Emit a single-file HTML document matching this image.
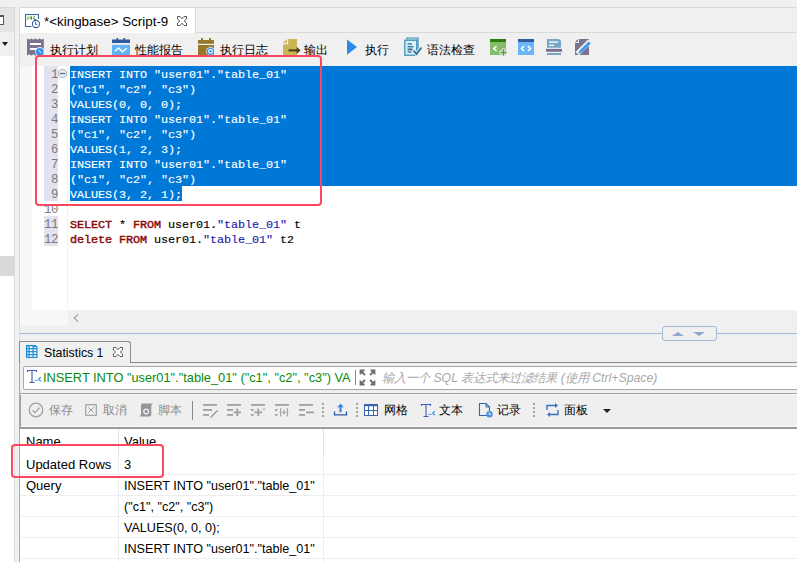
<!DOCTYPE html>
<html><head><meta charset="utf-8">
<style>
*{margin:0;padding:0;box-sizing:border-box}
html,body{width:797px;height:562px;overflow:hidden;background:#f0f0f0;font-family:"Liberation Sans",sans-serif;font-size:12px;color:#000;position:relative}
.a{position:absolute}
.ln{position:absolute;left:44px;width:14px;text-align:right;color:#7a7a7a;font-family:"Liberation Mono",monospace;font-size:12.3px;letter-spacing:-0.38px;line-height:15px}
.code{position:absolute;left:70px;font-family:"Liberation Mono",monospace;font-size:11.8px;letter-spacing:-0.08px;line-height:15px;white-space:pre;color:#000;-webkit-text-stroke:0.15px currentColor}
.kw{color:#8b0a0a;-webkit-text-stroke:0.45px currentColor}
.str{color:#1c1ca8}
.sel{color:#fff}
.tb{position:absolute;top:43px;font-size:12px;line-height:14px;white-space:nowrap}
.tb2{position:absolute;top:403px;font-size:12px;line-height:14px;white-space:nowrap}
.g{color:#8c8c8c}
.dots{position:absolute;top:403px;width:2px;height:15px;background:repeating-linear-gradient(to bottom,#a8a290 0,#a8a290 2px,transparent 2px,transparent 4px)}
.row{position:absolute;left:20px;width:777px;height:1px;background:#eeeeee}
.cell{position:absolute;font-size:13px;line-height:16px;white-space:nowrap}
</style></head><body>

<!-- top line -->
<div class="a" style="left:0;top:7px;width:15px;height:1px;background:#dadada"></div>
<div class="a" style="left:19px;top:7px;width:778px;height:1px;background:#dadada"></div>

<!-- left panel -->
<div class="a" style="left:0;top:8px;width:14px;height:24px;background:#e4e4e4"></div>
<div class="a" style="left:0;top:32px;width:14px;height:24px;background:#f0f0f0"></div>
<div class="a" style="left:0;top:56px;width:14px;height:506px;background:#fff"></div>
<div class="a" style="left:0;top:256px;width:14px;height:20px;background:#d9d9d9"></div>
<div class="a" style="left:14px;top:7px;width:1px;height:555px;background:#dadada"></div>
<div class="a" style="left:-6px;top:15px;width:10px;height:10px;border:1px solid #555;border-top-width:2px;background:#fff"></div>
<div class="a" style="left:2px;top:42px;width:0;height:0;border-left:3.6px solid transparent;border-right:3.6px solid transparent;border-top:4.5px solid #1a1a1a"></div>

<!-- editor panel outer border -->
<div class="a" style="left:19px;top:7px;width:1px;height:555px;background:#dadada"></div>

<!-- tab -->
<div class="a" style="left:20px;top:8px;width:175px;height:25px;background:#fff"></div>
<div class="a" style="left:195px;top:8px;width:1px;height:25px;background:#dadada"></div>
<div class="a" style="left:196px;top:32px;width:601px;height:1px;background:#dadada"></div>
<div class="a" style="left:44px;top:14px;font-size:13.4px;line-height:16px;white-space:nowrap">*&lt;kingbase&gt; Script-9</div>

<!-- toolbar text -->
<div class="tb" style="left:50px">执行计划</div>
<div class="tb" style="left:135px">性能报告</div>
<div class="tb" style="left:220px">执行日志</div>
<div class="tb" style="left:304px">输出</div>
<div class="tb" style="left:365px">执行</div>
<div class="tb" style="left:427px">语法检查</div>

<!-- tab icon -->
<svg class="a" style="left:24px;top:13px" width="17" height="17" viewBox="0 0 17 17">
<path d="M7.5 13.5H1.5V1.5H14.5V6" fill="none" stroke="#3a63ad" stroke-width="1.1"/>
<g fill="none" stroke="#3a9010" stroke-width="1"><path d="M3.5 4 L4.5 3.3 M3 6.5 L5.4 4.6"/><path d="M7.2 3.5 Q6.2 5 7.2 6.5 Q8.4 5 7.2 3.5"/><path d="M10 3 V6.5 H12"/></g>
<circle cx="12" cy="11" r="3.6" fill="#fff" stroke="#3a63ad" stroke-width="1.1"/>
<path d="M11.6 8.8V11.4H13.4" fill="none" stroke="#3a63ad" stroke-width="1"/>
</svg>
<!-- tab close -->
<svg class="a" style="left:176px;top:15px" width="12" height="12" viewBox="0 0 12 12">
<path d="M1.5 1.5 L4 1.5 L6 3.8 L8 1.5 L10.5 1.5 L10.5 4 L8.2 6 L10.5 8 L10.5 10.5 L8 10.5 L6 8.2 L4 10.5 L1.5 10.5 L1.5 8 L3.8 6 L1.5 4 Z" fill="#fff" stroke="#525252" stroke-width="1"/>
</svg>

<!-- toolbar icons -->
<svg class="a" style="left:26px;top:37px" width="19" height="20" viewBox="0 0 19 20">
<path d="M1 1.2 q2.1 2.6 4.2 0 q2.1 2.6 4.2 0 q2.1 2.6 4.2 0 q2.1 2.6 4.2 0 V18.8 q-2.1 -2.6 -4.2 0 q-2.1 -2.6 -4.2 0 q-2.1 -2.6 -4.2 0 q-2.1 -2.6 -4.2 0 Z" fill="#7b7390"/>
<rect x="4" y="6" width="11" height="2" fill="#fff"/>
<rect x="4" y="11" width="11" height="2" fill="#fff"/>
<circle cx="13.8" cy="14.7" r="4.6" fill="#f0f0f0"/>
<circle cx="13.8" cy="14.7" r="3.8" fill="#3390f0"/>
<path d="M13 13.2 L14.8 15.8" stroke="#fff" stroke-width="1"/>
</svg>

<svg class="a" style="left:111px;top:37px" width="20" height="20" viewBox="0 0 20 20">
<rect x="1" y="2.5" width="18" height="3.5" fill="#2f5aa0"/>
<rect x="5.5" y="1" width="1.6" height="2" fill="#2f5aa0"/>
<rect x="12.5" y="1" width="1.6" height="2" fill="#2f5aa0"/>
<rect x="1" y="7.8" width="18" height="11" fill="#62b2f6"/>
<path d="M3.8 14.2 L7.5 11 L11.5 14.8 L15.8 11.2" fill="none" stroke="#fff" stroke-width="1.4"/>
</svg>

<svg class="a" style="left:197px;top:37px" width="20" height="20" viewBox="0 0 20 20">
<rect x="1" y="3" width="16" height="3.8" fill="#97782a"/>
<rect x="4" y="1" width="2" height="2.5" fill="#97782a"/>
<rect x="12" y="1" width="2" height="2.5" fill="#97782a"/>
<rect x="1" y="8" width="16" height="11" fill="#97782a"/>
<path d="M13.5 9.5 L17.6 11.8 V16.6 L13.5 19 L9.4 16.6 V11.8 Z" fill="#f0f0f0"/>
<path d="M13.5 11 L16.4 12.6 V16 L13.5 17.6 L10.6 16 V12.6 Z" fill="#fff" stroke="#3390f0" stroke-width="1.3"/>
<circle cx="13.5" cy="14.3" r="1.2" fill="#3390f0"/>
</svg>

<svg class="a" style="left:282px;top:37px" width="20" height="20" viewBox="0 0 20 20">
<path d="M6.2 2 H15 V18.5 H1 V7.2 H6.2 Z" fill="#cbb655"/>
<path d="M1 6 L5 2 V6 Z" fill="#cbb655"/>
<rect x="6.5" y="12.4" width="9" height="2" fill="#4b4112"/>
<path d="M14.6 9.8 L18.6 13.4 L14.6 17 Z" fill="#4b4112"/>
</svg>

<svg class="a" style="left:346px;top:39px" width="12" height="16" viewBox="0 0 12 16">
<path d="M1 0.5 L11 8 L1 15.7 Z" fill="#2b8ae6"/>
</svg>

<svg class="a" style="left:403px;top:36px" width="20" height="21" viewBox="0 0 20 21">
<path d="M4 3.5 V2 H15 V15" fill="#bfe8f5" stroke="#3a90b4" stroke-width="1.2"/>
<rect x="1.8" y="4.2" width="12" height="15" fill="#d8f2fa" stroke="#3a90b4" stroke-width="1.3"/>
<rect x="4.5" y="7" width="4.5" height="1.8" fill="#4f9ab8"/>
<rect x="4.5" y="10" width="6" height="1.4" fill="#2f7a98"/>
<rect x="4.5" y="12.5" width="5" height="1.8" fill="#2f6a88"/>
<rect x="4.5" y="15.3" width="4" height="1.3" fill="#2f6a88"/>
<path d="M10.5 14.5 L13.5 18 L18.5 11.5" fill="none" stroke="#f0f0f0" stroke-width="3.6"/>
<path d="M10.5 14.5 L13.5 18 L18.5 11.5" fill="none" stroke="#2a6f90" stroke-width="1.8"/>
</svg>

<svg class="a" style="left:489px;top:38px" width="20" height="20" viewBox="0 0 20 20">
<rect x="1" y="1" width="16" height="16" fill="#86bb68"/>
<rect x="1" y="1" width="16" height="3" fill="#2e7a10"/>
<path d="M7.5 8.2 L4.8 10.5 L7.5 12.8" fill="none" stroke="#fff" stroke-width="1.6"/>
<path d="M14.5 10.5 V18.5 M10.5 14.5 H18.5" stroke="#f0f0f0" stroke-width="3.4"/>
<path d="M14.5 11.3 V17.7 M11.3 14.5 H17.7" stroke="#5a9a38" stroke-width="1.5"/>
</svg>

<svg class="a" style="left:517px;top:38px" width="18" height="18" viewBox="0 0 18 18">
<rect x="1" y="1" width="16" height="16" fill="#6ab6f8"/>
<rect x="1" y="1" width="16" height="3" fill="#2f5aa0"/>
<path d="M7 8 L4.5 10.5 L7 13 M11 8 L13.5 10.5 L11 13" fill="none" stroke="#fff" stroke-width="1.6"/>
</svg>

<svg class="a" style="left:545px;top:38px" width="18" height="18" viewBox="0 0 18 18">
<path d="M2 1 H14 L16 3 V9.7 H2 Z" fill="#7aa6c6"/>
<rect x="4" y="3.4" width="9" height="1.3" fill="#fff"/>
<rect x="4" y="6.6" width="5" height="1.3" fill="#fff"/>
<rect x="1" y="10.9" width="16" height="2.9" fill="#7a7390"/>
<rect x="2" y="15" width="14" height="2" fill="#7aa6c6"/>
</svg>

<svg class="a" style="left:574px;top:38px" width="18" height="18" viewBox="0 0 18 18">
<path d="M5 1 H15 V17 H1 V5 H5 Z" fill="#7a7390"/>
<path d="M1 4 L4 1 V4 Z" fill="#7a7390"/>
<path d="M3.2 15.8 L15.8 3.2" stroke="#f0f0f0" stroke-width="5"/>
<path d="M5.6 12.4 L14.6 3.4 L16.6 5.4 L7.6 14.4 Z" fill="#3a9af0"/>
<path d="M5.6 12.4 L7.6 14.4 L4 16 Z" fill="#3a9af0"/>
</svg>


<!-- editor -->
<div class="a" style="left:20px;top:56px;width:777px;height:10px;background:#f0f0f0"></div>
<div class="a" style="left:20px;top:66px;width:777px;height:244px;background:#fff"></div>
<div class="a" style="left:20px;top:66px;width:12px;height:244px;background:#f7f7f7"></div>
<div class="a" style="left:67px;top:66px;width:1px;height:244px;background:#f2f2f2"></div>
<div class="a" style="left:44px;top:66px;width:14px;height:135px;background:#e3e3f0"></div>
<div class="a" style="left:44px;top:216px;width:14px;height:30px;background:#e3e3f0"></div>
<div class="a" style="left:70px;top:66px;width:727px;height:120px;background:#0078d7"></div>
<div class="a" style="left:70px;top:186px;width:112px;height:15px;background:#0078d7"></div>
<!-- fold marker -->
<svg class="a" style="left:57px;top:68px" width="11" height="11" viewBox="0 0 11 11">
<circle cx="5.5" cy="5.5" r="4.1" fill="#e2eaf2" stroke="#a8b2c2" stroke-width="1"/>
<path d="M3 5.5 H8" stroke="#606878" stroke-width="1.2"/>
</svg>

<div class="ln" style="top:68px">1<br>2<br>3<br>4<br>5<br>6<br>7<br>8<br>9<br>10<br>11<br>12</div>

<div class="code sel" style="top:68px">INSERT INTO "user01"."table_01"
("c1", "c2", "c3")
VALUES(0, 0, 0);
INSERT INTO "user01"."table_01"
("c1", "c2", "c3")
VALUES(1, 2, 3);
INSERT INTO "user01"."table_01"
("c1", "c2", "c3")
VALUES(3, 2, 1);</div>
<div class="code" style="top:218px"><span class="kw">SELECT</span> * <span class="kw">FROM</span> user01.<span class="str">"table_01"</span> t
<span class="kw">delete</span> <span class="kw">FROM</span> user01.<span class="str">"table_01"</span> t2</div>

<!-- h scrollbar -->
<div class="a" style="left:20px;top:310px;width:48px;height:16px;background:#f7f7f7"></div>
<svg class="a" style="left:72px;top:313px" width="8" height="10" viewBox="0 0 8 10"><path d="M6 1.5 L2.2 5 L6 8.5" fill="none" stroke="#a8a8a8" stroke-width="1.4"/></svg>

<!-- sash -->
<div class="a" style="left:20px;top:333px;width:777px;height:1px;background:#a3bad8"></div>
<div class="a" style="left:662px;top:326px;width:55px;height:15px;border:1px solid #a3bad8;border-radius:3px;background:#f0f0f0"></div>
<div class="a" style="left:672px;top:332px;width:0;height:0;border-left:6.5px solid transparent;border-right:6.5px solid transparent;border-bottom:4px solid #8ea8cc"></div>
<div class="a" style="left:693px;top:332px;width:0;height:0;border-left:6.5px solid transparent;border-right:6.5px solid transparent;border-top:4.5px solid #8ea8cc"></div>

<!-- results panel -->
<div class="a" style="left:19px;top:341px;width:1px;height:221px;background:#a8a8a8"></div>
<div class="a" style="left:19px;top:341px;width:112px;height:22px;border:1px solid #8c8c8c;border-bottom:none;border-top-right-radius:3px;background:#f0f0f0"></div>
<div class="a" style="left:130px;top:362px;width:667px;height:1px;background:#8c8c8c"></div>
<div class="a" style="left:44px;top:345px;font-size:12.3px;line-height:16px;white-space:nowrap">Statistics 1</div>

<!-- filter -->
<div class="a" style="left:23px;top:366px;width:780px;height:24px;border:1px solid #a8a8a8;border-radius:2px;background:#fff"></div>
<div class="a" style="left:43px;top:370px;font-size:12.8px;line-height:16px;white-space:nowrap;color:#0a8a0a">INSERT INTO "user01"."table_01" ("c1", "c2", "c3") VA</div>
<div class="a" style="left:382px;top:370px;font-size:12.3px;line-height:16px;white-space:nowrap;color:#a8a8a8;font-style:italic">输入一个 SQL 表达式来过滤结果 (使用 Ctrl+Space)</div>

<!-- toolbar 2 -->
<div class="a" style="left:20px;top:393px;width:777px;height:36px;border-top:1px solid #a0a0a0;border-left:1px solid #a0a0a0;border-bottom:2px solid #9a9a9a;background:#efefef"></div>
<div class="a" style="left:20px;top:394px;width:777px;height:1px;background:#fafafa"></div>
<div class="a" style="left:21px;top:426px;width:776px;height:1px;background:#fafafa"></div>

<!-- statistics tab icon -->
<svg class="a" style="left:25px;top:344px" width="14" height="15" viewBox="0 0 14 15">
<path d="M1 1 H10.5 L12.5 3 V14 H1 Z" fill="#1a8ad0"/>
<g fill="#fff">
<rect x="2.3" y="2.3" width="1.2" height="1.8"/><rect x="4.7" y="2.3" width="2.8" height="1.8"/><rect x="8.7" y="3.2" width="2.6" height="0.9"/>
<rect x="2.3" y="5.3" width="1.2" height="1.8"/><rect x="4.7" y="5.3" width="2.8" height="1.8"/><rect x="8.7" y="5.3" width="2.6" height="1.8"/>
<rect x="2.3" y="8.3" width="1.2" height="1.8"/><rect x="4.7" y="8.3" width="2.8" height="1.8"/><rect x="8.7" y="8.3" width="2.6" height="1.8"/>
<rect x="2.3" y="11.3" width="1.2" height="1.6"/><rect x="4.7" y="11.3" width="2.8" height="1.6"/><rect x="8.7" y="11.3" width="2.6" height="1.6"/>
</g>
</svg>
<!-- statistics close -->
<svg class="a" style="left:112px;top:346px" width="12" height="12" viewBox="0 0 12 12">
<path d="M1.5 1.5 L4 1.5 L6 3.7 L8 1.5 L10.5 1.5 L10.5 4 L8.3 6 L10.5 8 L10.5 10.5 L8 10.5 L6 8.3 L4 10.5 L1.5 10.5 L1.5 8 L3.7 6 L1.5 4 Z" fill="#fff" stroke="#5a5a5a" stroke-width="1"/>
</svg>
<!-- filter T icon -->
<svg class="a" style="left:26px;top:369px" width="16" height="15" viewBox="0 0 16 15">
<path d="M1.5 3 V1.5 H10.5 V3 M6 1.5 V13.5 M3.5 13.5 H8.5" fill="none" stroke="#3a5fb0" stroke-width="1.1"/>
<path d="M8.5 11.5 H11.5" stroke="#5a9ae0" stroke-width="1"/>
<path d="M14.8 8.3 L12.6 10.3 L14.8 12.3" fill="none" stroke="#4a9ae8" stroke-width="1.3"/>
</svg>
<!-- filter separator + expand -->
<div class="a" style="left:355px;top:370px;width:1px;height:15px;background:#8a8a8a"></div>
<svg class="a" style="left:359px;top:369px" width="17" height="17" viewBox="0 0 17 17">
<g fill="none" stroke="#6a6a6a" stroke-width="1.8">
<path d="M1.5 5.5 V1.5 H5.5 M1.8 1.8 L6 6"/>
<path d="M11.5 1.5 H15.5 V5.5 M15.2 1.8 L11 6"/>
<path d="M1.5 11.5 V15.5 H5.5 M1.8 15.2 L6 11"/>
<path d="M15.5 11.5 V15.5 H11.5 M15.2 15.2 L11 11"/>
</g>
</svg>

<!-- results toolbar icons -->
<svg class="a" style="left:28px;top:402px" width="16" height="16" viewBox="0 0 16 16">
<circle cx="8" cy="8" r="6.8" fill="none" stroke="#a0a0a0" stroke-width="1.3"/>
<path d="M4.6 8.2 L7 10.6 L11.4 5.8" fill="none" stroke="#a0a0a0" stroke-width="1.3"/>
</svg>
<div class="tb2 g" style="left:49px">保存</div>
<svg class="a" style="left:85px;top:404px" width="12" height="12" viewBox="0 0 12 12">
<rect x="0.7" y="0.7" width="10.6" height="10.6" fill="none" stroke="#a0a0a0" stroke-width="1.2"/>
<path d="M3.3 3.3 L8.7 8.7 M8.7 3.3 L3.3 8.7" stroke="#a0a0a0" stroke-width="1"/>
</svg>
<div class="tb2 g" style="left:103px">取消</div>
<svg class="a" style="left:138px;top:402px" width="16" height="16" viewBox="0 0 16 16">
<path d="M4.5 1.5 H15 Q13.3 2.3 13.3 4 V12.5 Q13.3 14.5 11 14.5 H1 Q3 13.8 3 12 V3.5 Q3 1.5 4.5 1.5 Z" fill="#959595"/>
<circle cx="8.2" cy="9.6" r="2.4" fill="none" stroke="#f0f0f0" stroke-width="1.3"/>
</svg>
<div class="tb2 g" style="left:158px">脚本</div>
<div class="a" style="left:192px;top:401px;width:1px;height:19px;background:#8a8a8a"></div>

<svg class="a" style="left:202px;top:403px" width="18" height="16" viewBox="0 0 18 16">
<g fill="#a0a0a0">
<rect x="1" y="1" width="14" height="1.8"/><rect x="1" y="6" width="9" height="1.8"/><rect x="1" y="11" width="6" height="1.8"/>
</g>
<path d="M8.5 14.5 L15.5 7.5" stroke="#a0a0a0" stroke-width="1.6"/>
</svg>
<svg class="a" style="left:226px;top:403px" width="17" height="16" viewBox="0 0 17 16">
<g fill="#a0a0a0">
<rect x="1" y="1" width="14" height="1.8"/><rect x="1" y="6" width="6" height="1.8"/><rect x="1" y="11" width="6" height="1.8"/>
<rect x="7.5" y="8.5" width="7.5" height="1.8"/><rect x="10.4" y="5.6" width="1.8" height="7.6"/>
</g>
</svg>
<svg class="a" style="left:250px;top:403px" width="17" height="16" viewBox="0 0 17 16">
<g fill="#a0a0a0">
<rect x="1" y="1" width="14" height="1.8"/><rect x="1" y="6" width="2.5" height="1.8"/><rect x="1" y="11" width="2.5" height="1.8"/>
<rect x="4.5" y="8.5" width="7.5" height="1.8"/><rect x="7.4" y="5.6" width="1.8" height="7.6"/>
</g>
<path d="M12.5 5 L15 7.5 M15 5 L12.5 7.5" stroke="#b0b0b0" stroke-width="0.8"/>
</svg>
<svg class="a" style="left:274px;top:403px" width="17" height="16" viewBox="0 0 17 16">
<g fill="#a0a0a0">
<rect x="1" y="1" width="14" height="1.8"/><rect x="1" y="6" width="2.5" height="1.8"/><rect x="1" y="11" width="2.5" height="1.8"/>
</g>
<path d="M7 5 Q5.5 9 7 13.5 M13 5 Q14.5 9 13 13.5 M10 6.8 V11.8 M7.5 9.3 H12.5" fill="none" stroke="#a0a0a0" stroke-width="1.1"/>
</svg>
<svg class="a" style="left:298px;top:403px" width="17" height="16" viewBox="0 0 17 16">
<g fill="#a0a0a0">
<rect x="1" y="1" width="14" height="1.8"/><rect x="1" y="6" width="6" height="1.8"/><rect x="1" y="11" width="6" height="1.8"/>
<rect x="8" y="8.5" width="8" height="1.8"/>
</g>
</svg>
<div class="dots" style="left:322px"></div>
<svg class="a" style="left:333px;top:402px" width="15" height="15" viewBox="0 0 15 15">
<path d="M7.5 1.5 L10.8 5.3 H8.6 V10.2 H6.4 V5.3 H4.2 Z" fill="#3a8ae0"/>
<path d="M1.5 9.5 V12.8 H13.5 V9.5" fill="none" stroke="#2f5aa0" stroke-width="1.3"/>
</svg>
<div class="dots" style="left:356px"></div>
<svg class="a" style="left:363px;top:403px" width="16" height="14" viewBox="0 0 16 14">
<rect x="1.5" y="1.5" width="13" height="11" fill="#fff" stroke="#3a63ad" stroke-width="1"/>
<rect x="1" y="1" width="14" height="2.2" fill="#3a63ad"/>
<path d="M1.5 7.5 H14.5 M5.5 3 V12.5 M10.5 3 V12.5" stroke="#3a63ad" stroke-width="1"/>
</svg>
<div class="tb2" style="left:384px">网格</div>
<svg class="a" style="left:420px;top:403px" width="16" height="15" viewBox="0 0 16 15">
<path d="M1.5 3 V1.5 H10.5 V3 M6 1.5 V13.5 M3.5 13.5 H8.5" fill="none" stroke="#3a5fb0" stroke-width="1.1"/>
<path d="M8.5 11.5 H11.5" stroke="#5a9ae0" stroke-width="1"/>
<path d="M14.8 8.3 L12.6 10.3 L14.8 12.3" fill="none" stroke="#4a9ae8" stroke-width="1.3"/>
</svg>
<div class="tb2" style="left:439px">文本</div>
<svg class="a" style="left:478px;top:402px" width="15" height="16" viewBox="0 0 15 16">
<path d="M10 13.5 H1.5 V1.5 H8 L11.5 5 V9" fill="none" stroke="#3a63ad" stroke-width="1.1"/>
<path d="M8 1.5 V5 H11.5" fill="none" stroke="#3a63ad" stroke-width="1"/>
<circle cx="11.5" cy="12.2" r="3.2" fill="#4a90e0"/>
<path d="M11.3 10.5 V12.5 H13" fill="none" stroke="#fff" stroke-width="0.9"/>
</svg>
<div class="tb2" style="left:497px">记录</div>
<div class="dots" style="left:533px"></div>
<svg class="a" style="left:545px;top:402px" width="15" height="16" viewBox="0 0 15 16">
<path d="M2 8 V3.5 H11" fill="none" stroke="#3a70c0" stroke-width="1.4"/>
<path d="M10 1 L13 3.5 L10 6 Z" fill="#3a70c0"/>
<path d="M13 8 V12.5 H4" fill="none" stroke="#3a70c0" stroke-width="1.4"/>
<path d="M5 10 L2 12.5 L5 15 Z" fill="#3a70c0"/>
</svg>
<div class="tb2" style="left:564px">面板</div>
<div class="a" style="left:603px;top:409px;width:0;height:0;border-left:4px solid transparent;border-right:4px solid transparent;border-top:4.5px solid #222"></div>


<!-- table -->
<div class="a" style="left:20px;top:429px;width:777px;height:133px;background:#fff"></div>
<div class="a" style="left:118px;top:429px;width:1px;height:133px;background:#ececf4"></div>
<div class="a" style="left:323px;top:429px;width:1px;height:133px;background:#ececf4"></div>
<div class="a" style="left:118px;top:429px;width:1px;height:25px;background:#e0e0e0"></div>
<div class="a" style="left:323px;top:429px;width:1px;height:25px;background:#e0e0e0"></div>
<div class="row" style="top:474px"></div>
<div class="row" style="top:495px"></div>
<div class="row" style="top:516px"></div>
<div class="row" style="top:537px"></div>
<div class="row" style="top:558px"></div>

<div class="cell" style="left:26px;top:434px">Name</div>
<div class="cell" style="left:124px;top:434px">Value</div>
<div class="cell" style="left:26px;top:457px">Updated Rows</div>
<div class="cell" style="left:124px;top:457px">3</div>
<div class="cell" style="left:26px;top:478px">Query</div>
<div class="cell" style="left:124px;top:478px;font-size:12.6px">INSERT INTO "user01"."table_01"</div>
<div class="cell" style="left:124px;top:499px;font-size:12.6px">("c1", "c2", "c3")</div>
<div class="cell" style="left:124px;top:520px;font-size:12.6px">VALUES(0, 0, 0);</div>
<div class="cell" style="left:124px;top:541px;font-size:12.6px">INSERT INTO "user01"."table_01"</div>

<!-- red annotations -->
<div class="a" style="left:35px;top:55px;width:287px;height:151px;border:2px solid #fc4763;border-radius:4px"></div>
<div class="a" style="left:11px;top:444px;width:153px;height:34px;border:2px solid #fc4763;border-radius:4px"></div>

</body></html>
